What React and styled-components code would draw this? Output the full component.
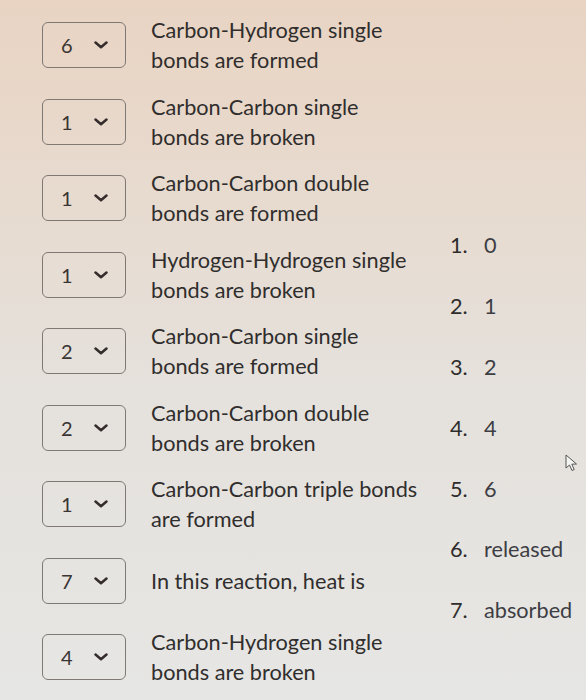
import React from "react";
import styled, { createGlobalStyle } from "styled-components";

const GlobalStyle = createGlobalStyle`
  html, body {
    margin: 0;
    padding: 0;
  }
  body {
    background: linear-gradient(180deg, #e9d4c3 0%, #e7dbd0 30%, #e5e1dc 55%, #e6e6e4 100%);
    min-height: 700px;
    font-family: "Lato", "Liberation Sans", sans-serif;
    color: #302e2d;
  }
`;

const Page = styled.div`
  position: relative;
  width: 586px;
  height: 700px;
  overflow: hidden;
  display: flex;
  padding-top: 7px;
  box-sizing: border-box;
`;

const Matches = styled.div`
  display: flex;
  flex-direction: column;
  width: 438px;
`;

const Row = styled.div`
  display: flex;
  align-items: center;
  height: 76.5px;
  padding-left: 42px;
  gap: 25px;
`;

const Select = styled.div`
  box-sizing: border-box;
  width: 84px;
  height: 46px;
  border: 1.5px solid #7f7974;
  border-radius: 6px;
  display: flex;
  align-items: center;
  justify-content: space-between;
  padding: 0 17px 0 18px;
  font-size: 20px;
  color: #3a3432;
`;

const Chevron = styled.svg`
  width: 14px;
  height: 8px;
`;

const Statement = styled.div`
  width: 271px;
  font-size: 21.7px;
  line-height: 30px;
`;

const Options = styled.ol`
  list-style: none;
  margin: 0;
  padding: 0;
  padding-top: 227px;
  display: flex;
  flex-direction: column;
`;

const Option = styled.li`
  display: flex;
  height: 60.9px;
  align-items: flex-start;
  font-size: 21.7px;
  line-height: 22px;
  padding-left: 12px;
`;

const Num = styled.span`
  width: 34px;
  color: #2f2d2c;
`;

const Value = styled.span`
  color: #3d3e44;
`;

const Cursor = styled.svg`
  position: absolute;
  left: 565px;
  top: 454px;
  width: 14px;
  height: 18px;
`;

const rows = [
  { value: "6", text: "Carbon-Hydrogen single bonds are formed" },
  { value: "1", text: "Carbon-Carbon single bonds are broken" },
  { value: "1", text: "Carbon-Carbon double bonds are formed" },
  { value: "1", text: "Hydrogen-Hydrogen single bonds are broken" },
  { value: "2", text: "Carbon-Carbon single bonds are formed" },
  { value: "2", text: "Carbon-Carbon double bonds are broken" },
  { value: "1", text: "Carbon-Carbon triple bonds are formed" },
  { value: "7", text: "In this reaction, heat is" },
  { value: "4", text: "Carbon-Hydrogen single bonds are broken" },
];

const answers = ["0", "1", "2", "4", "6", "released", "absorbed"];

const App = () => {
  return (
    <>
      <GlobalStyle />
      <Page>
        <Matches>
          {rows.map((r, i) => (
            <Row key={i}>
              <Select>
                <span>{r.value}</span>
                <Chevron viewBox="0 0 14 8">
                  <path
                    d="M1.5 1.5 L7 6.2 L12.5 1.5"
                    fill="none"
                    stroke="#352c2c"
                    strokeWidth="2.5"
                    strokeLinecap="round"
                    strokeLinejoin="round"
                  />
                </Chevron>
              </Select>
              <Statement>{r.text}</Statement>
            </Row>
          ))}
        </Matches>
        <Options>
          {answers.map((a, i) => (
            <Option key={i}>
              <Num>{i + 1}.</Num>
              <Value>{a}</Value>
            </Option>
          ))}
        </Options>
        <Cursor viewBox="0 0 14 18">
          <path
            d="M1 1 L1 14 L4.5 11 L7 16.5 L9.2 15.5 L6.8 10.2 L11.5 10 Z"
            fill="#f4f4f2"
            stroke="#555"
            strokeWidth="1"
            strokeLinejoin="round"
          />
        </Cursor>
      </Page>
    </>
  );
};

export default App;
